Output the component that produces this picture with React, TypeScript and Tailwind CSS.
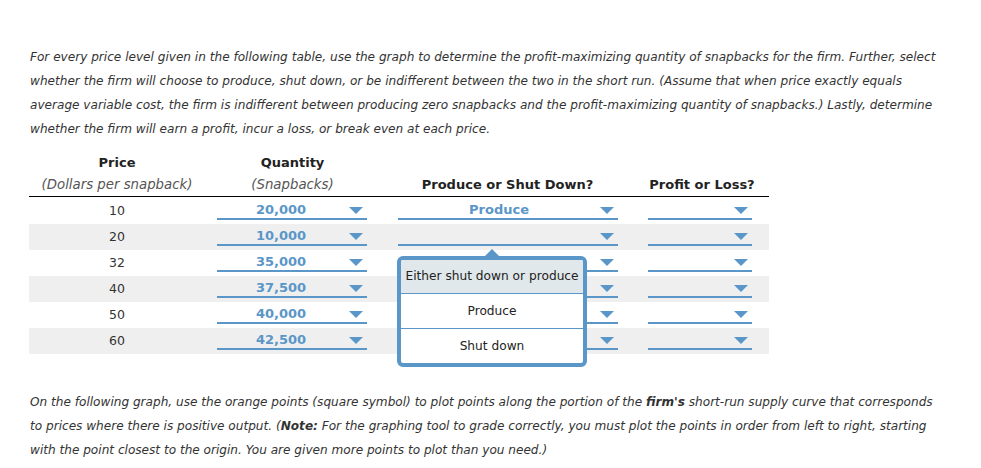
import React from "react";

function Tri() {
  return (
    <svg width="14" height="7" viewBox="0 0 14 7" className="shrink-0">
      <polygon points="0,0 14,0 7,7" fill="#5a96c8" />
    </svg>
  );
}

function Select({ value, width, textShift = 0 }: { value?: string; width: number; textShift?: number }) {
  return (
    <div
      className="flex items-center h-[18px] border-b-2 border-[#5a96c8] pr-[4px]"
      style={{ width }}
    >
      <span
        className="flex-1 text-center font-bold text-[13px] text-[#5a96c8] leading-[16px]"
        style={{ marginRight: textShift }}
      >
        {value ?? ""}
      </span>
      <Tri />
    </div>
  );
}

const rows = [
  { p: "10", q: "20,000", s: "Produce" },
  { p: "20", q: "10,000" },
  { p: "32", q: "35,000" },
  { p: "40", q: "37,500" },
  { p: "50", q: "40,000" },
  { p: "60", q: "42,500" },
];

export default function App() {
  return (
    <div
      className="w-[981px] h-[468px] bg-white text-[#333] overflow-hidden"
      style={{ fontFamily: "Verdana, 'DejaVu Sans', sans-serif" }}
    >
      <div className="pl-[30px] pr-[36px] pt-[45px]">
        <p className="italic text-[12.1px] leading-[24px] text-[#333]">
          For every price level given in the following table, use the graph to determine the profit-maximizing quantity of snapbacks for the firm. Further, select whether the firm will choose to produce, shut down, or be indifferent between the two in the short run. (Assume that when price exactly equals average variable cost, the firm is indifferent between producing zero snapbacks and the profit-maximizing quantity of snapbacks.) Lastly, determine whether the firm will earn a profit, incur a loss, or break even at each price.
        </p>
      </div>

      <div className="relative ml-[29px] mt-[11px] w-[740px]">
        <div className="grid grid-cols-[176px_175px_255px_134px] text-[13px] leading-[22px]">
          <div className="text-center font-bold text-[#222]">Price</div>
          <div className="text-center font-bold text-[#222]">Quantity</div>
          <div />
          <div />
          <div className="text-center italic text-[13.3px] text-[#555]">(Dollars per snapback)</div>
          <div className="text-center italic text-[13.3px] text-[#555]">(Snapbacks)</div>
          <div className="text-center font-bold text-[#222]">Produce or Shut Down?</div>
          <div className="text-center font-bold text-[#222]">Profit or Loss?</div>
        </div>
        <div className="h-px bg-black" />
        <div className="mt-px">
          {rows.map((r, i) => (
            <div
              key={r.p}
              className={`grid grid-cols-[176px_175px_255px_134px] h-[26px] items-start ${i % 2 === 1 ? "bg-[#efefef]" : "bg-white"}`}
            >
              <div className="text-center text-[12.5px] leading-[26px] text-[#333]">{r.p}</div>
              <div className="pl-[12px] pt-[4px]">
                <Select value={r.q} width={150} textShift={4} />
              </div>
              <div className="pl-[18px] pt-[4px]">
                <Select value={r.s} width={220} />
              </div>
              <div className="pl-[13px] pt-[4px]">
                <Select width={104} />
              </div>
            </div>
          ))}
        </div>

        <div className="absolute left-[368px] top-[104px] w-[190px]">
          <div className="absolute left-[88px] -top-[7px] w-0 h-0 border-l-[7px] border-r-[7px] border-b-[7px] border-l-transparent border-r-transparent border-b-[#5a96c8]" />
          <div className="border-4 border-[#5a96c8] rounded-[6px] bg-white overflow-hidden text-[12.2px] text-[#222]">
            <div className="h-[34px] flex items-center justify-center bg-[#e1e8eb] border-b border-[#5a96c8]">
              Either shut down or produce
            </div>
            <div className="h-[35px] flex items-center justify-center border-b border-[#5a96c8]">Produce</div>
            <div className="h-[34px] flex items-center justify-center">Shut down</div>
          </div>
        </div>
      </div>

      <div className="pl-[30px] pr-[36px] mt-[36px]">
        <p className="italic text-[12.1px] leading-[24px] text-[#333]">
          On the following graph, use the orange points (square symbol) to plot points along the portion of the <b>firm's</b> short-run supply curve that corresponds to prices where there is positive output. (<b>Note:</b> For the graphing tool to grade correctly, you must plot the points in order from left to right, starting with the point closest to the origin. You are given more points to plot than you need.)
        </p>
      </div>
    </div>
  );
}
